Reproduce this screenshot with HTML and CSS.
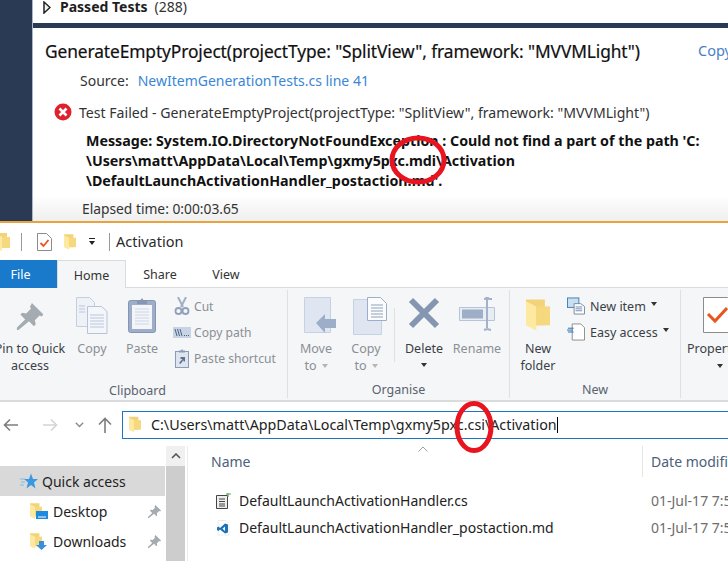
FILE: index.html
```html
<!DOCTYPE html>
<html lang="en">
<head>
<meta charset="utf-8">
<title>Activation</title>
<link rel="stylesheet" href="styles.css">
</head>
<body>
<svg class="defs" width="0" height="0">
  <defs>
    <symbol id="folder" viewBox="0 0 14 18">
      <path d="M0 0h11v15H4l-4-1z" fill="#f3d37a"/>
      <path d="M0 1l6 3v14l-6-3z" fill="#fde9a0"/>
      <path d="M6 4h8v11H6z" fill="#f6d97e"/>
    </symbol>
    <symbol id="pin" viewBox="0 0 14 14">
      <path d="M8 0l6 6-1 1-1-.5-2.500 2.500.5 2-1 1-2.500-2.500L1 14l-1 0 0-1 4.500-4.500L2 6l1-1 2 .5L7.500 3 7 2z" fill="#a4abb1"/>
    </symbol>
  </defs>
</svg>

<section class="vs">
  <div class="vs-rail"></div>
  <div class="vs-main">
    <div class="passed"><svg class="tri" width="8" height="13" viewBox="0 0 8 13"><path d="M1 1l6 5.500L1 12z" fill="#f4f4f4" stroke="#222" stroke-width="1.500"/></svg><b>Passed Tests</b><span class="count">(288)</span></div>
    <div class="vs-bar"></div>
    <div class="title-row">
      <h1>GenerateEmptyProject(projectType: "SplitView", framework: "MVVMLight")</h1>
      <a class="copy">Copy</a>
    </div>
    <p class="source">Source:<a>NewItemGenerationTests.cs line 41</a></p>
    <p class="failed">
      <svg class="err" width="18" height="18" viewBox="0 0 18 18"><circle cx="9" cy="9" r="8.500" fill="#e0202f"/><path d="M5.500 5.500l7 7M12.500 5.500l-7 7" stroke="#fff" stroke-width="2.600"/></svg>
      Test Failed - GenerateEmptyProject(projectType: "SplitView", framework: "MVVMLight")
    </p>
    <p class="msg">Message: System.IO.DirectoryNotFoundException : Could not find a part of the path 'C:<br>\Users\matt\AppData\Local\Temp\gxmy5pxc.mdi\Activation<br>\DefaultLaunchActivationHandler_postaction.md'.</p>
    <p class="elapsed">Elapsed time: 0:00:03.65</p>
  </div>
</section>

<section class="ex">
  <div class="ex-title">
    <svg class="q-folder0" width="10" height="18"><use href="#folder" x="-4" width="14" height="18"/></svg>
    <i class="q-sep"></i>
    <svg class="q-check" width="15" height="18" viewBox="0 0 15 18"><path d="M.5.500h9l5 5v12H.5z" fill="#fff" stroke="#8c8c8c"/><path d="M3.500 10l3 3 5-6" fill="none" stroke="#e8551f" stroke-width="1.800"/></svg>
    <svg class="q-folder" width="12" height="18"><use href="#folder" width="12" height="18"/></svg>
    <svg class="q-drop" width="8" height="8" viewBox="0 0 8 8"><path d="M1 0h6v1H1zM1 3h6L4 7z" fill="#222"/></svg>
    <i class="q-sep q-sep2"></i>
    <span class="q-name">Activation</span>
  </div>

  <nav class="tabs">
    <span class="tab file">File</span>
    <span class="tab home">Home</span>
    <span class="tab share">Share</span>
    <span class="tab view">View</span>
  </nav>

  <div class="ribbon">
    <div class="group g-clip">
      <div class="g-body">
        <div class="big w60">
          <svg class="ico ico-pin" width="27" height="27"><use href="#pin" width="27" height="27"/></svg>
          <span class="dark">Pin to Quick<br>access</span>
        </div>
        <div class="big w50 off">
          <svg class="ico" width="32" height="38" viewBox="0 0 32 38"><path d="M.5.500h13l5 5v24H.5z" fill="#eef1f6" stroke="#c3cfe0"/><path d="M11.500 9.500h14l5.500 5v22H11.500z" fill="#f4f6fa" stroke="#b5c4da"/><path d="M14 18h14M14 21h14M14 24h14M14 27h14M14 30h14M3 9h6M3 12h6M3 15h6" stroke="#b9c7dc"/></svg>
          <span>Copy</span>
        </div>
        <div class="big w50 off">
          <svg class="ico" width="28" height="36" viewBox="0 0 28 36"><rect x=".5" y="3.500" width="27" height="32" rx="2" fill="#9eaec8" stroke="#8496b4"/><rect x="4" y="8" width="20" height="24" fill="#f3f5f9"/><path d="M7 12h14M7 15h14M7 18h14M7 21h14M7 24h14M7 27h14" stroke="#cdd6e4"/><path d="M9 7V4h3l2-3 2 3h3v3z" fill="#8496b4"/></svg>
          <span>Paste</span>
        </div>
        <div class="smalls off clip-smalls">
          <div class="small"><svg width="14" height="18" viewBox="0 0 14 18"><path d="M3 0l5 10M11 0L6 10" stroke="#a3b0c3" stroke-width="2"/><circle cx="3.500" cy="14" r="3" fill="none" stroke="#8fa0ba" stroke-width="1.800"/><circle cx="10.500" cy="14" r="3" fill="none" stroke="#8fa0ba" stroke-width="1.800"/></svg><span>Cut</span></div>
          <div class="small"><svg width="18" height="11" viewBox="0 0 18 11"><rect width="18" height="11" fill="#c8d4e6"/><path d="M2 2l2 7M4.500 2l2 7M7 2l2 7" stroke="#4c6283"/><path d="M11 8.500h1M13 8.500h1M15 8.500h1" stroke="#4c6283"/></svg><span>Copy path</span></div>
          <div class="small"><svg width="14" height="19" viewBox="0 0 14 19"><rect x=".5" y="2.500" width="13" height="16" fill="#dfe5ee" stroke="#8a9cb8"/><path d="M4 3.500V1.500h2L7 0l1 1.500h2v2z" fill="#8a9cb8"/><path d="M4 14l3.500-4H5.500V8H10v4.500H8.500V11L5.500 15z" fill="#5d7396"/></svg><span>Paste shortcut</span></div>
        </div>
      </div>
      <div class="g-label label-clip">Clipboard</div>
    </div>

    <div class="group g-org">
      <div class="g-body">
        <div class="big w50 off shifted">
          <svg class="ico" width="32" height="36" viewBox="0 0 32 36"><path d="M.5.500h26v35H.5z" fill="#dfe6f1" stroke="#c6d2e4"/><path d="M12 26l9-9v5h11v9H21v5z" fill="#9daec8"/></svg>
          <span>Move<br>to<i class="caret light"></i></span>
        </div>
        <div class="big w50 off shifted">
          <svg class="ico" width="34" height="38" viewBox="0 0 34 38"><path d="M.5 2.500h28v35H.5z" fill="#dfe6f1" stroke="#c6d2e4"/><path d="M14.500.500h13l6 6v17h-19z" fill="#fbfcfd" stroke="#9daec8"/><path d="M18 8h12M18 11h12M18 14h12M18 17h12M18 20h12" stroke="#8fa0ba"/></svg>
          <span>Copy<br>to<i class="caret light"></i></span>
        </div>
        <i class="inner-sep"></i>
        <div class="big w56 del">
          <svg class="ico" width="32" height="32" viewBox="0 0 32 32"><path d="M3 3l26 26M29 3L3 29" stroke="#8596b3" stroke-width="6"/></svg>
          <span class="dark">Delete<br><i class="caret"></i></span>
        </div>
        <div class="big w50 off">
          <svg class="ico" width="36" height="34" viewBox="0 0 36 34"><path d="M.5 10.500h35v13H.5z" fill="#e8edf4" stroke="#b5c4da"/><rect x="3" y="12.500" width="21" height="9" fill="#9eaec8"/><path d="M28 0l2 2h3M28 0l-2 2h-1M28 1v30M28 32l-3 1M28 32l4 1" stroke="#a3b2ca" stroke-width="2" fill="none"/></svg>
          <span>Rename</span>
        </div>
      </div>
      <div class="g-label">Organise</div>
    </div>

    <div class="group g-new">
      <div class="g-body">
        <div class="big w56">
          <svg class="ico" width="24" height="36"><use href="#folder" width="24" height="36"/></svg>
          <span class="dark">New<br>folder</span>
        </div>
        <div class="smalls dark new-smalls">
          <div class="small"><svg width="19" height="18" viewBox="0 0 19 18"><rect x=".5" y=".5" width="12" height="10" fill="#c9def0" stroke="#3f7fb5"/><path d="M7.500 6.500h7l4 3v8h-11z" fill="#fff" stroke="#7a8a9c"/><path d="M9 10h7M9 12h7M9 14h7" stroke="#6d8bb0"/></svg><span>New item</span><i class="caret"></i></div>
          <div class="small"><svg width="19" height="18" viewBox="0 0 19 18"><path d="M5.500.5h9l4 4v13h-13z" fill="#fff" stroke="#8c8c8c"/><path d="M1 5h6M0 7h6M1 9h6" stroke="#1f6fb5"/></svg><span>Easy access</span><i class="caret"></i></div>
        </div>
      </div>
      <div class="g-label">New</div>
    </div>

    <div class="group g-open">
      <div class="g-body">
        <div class="big w-prop">
          <svg class="ico" width="36" height="36" viewBox="0 0 36 36"><path d="M.5.500h24l11 11v24H.5z" fill="#fff" stroke="#8c8c8c"/><path d="M5 17l7 7 12-13" fill="none" stroke="#e8551f" stroke-width="3"/></svg>
          <span class="dark">Properties<br><i class="caret"></i></span>
        </div>
      </div>
    </div>
  </div>

  <div class="addr-row">
    <svg class="nav-ico back" width="16" height="14" viewBox="0 0 16 14"><path d="M15 7H2M7 1.500L1.500 7 7 12.500" fill="none" stroke="#7d7d7d" stroke-width="1.600"/></svg>
    <svg class="nav-ico fwd" width="16" height="14" viewBox="0 0 16 14"><path d="M1 7h13M9 1.500L14.500 7 9 12.500" fill="none" stroke="#d4d4d4" stroke-width="1.600"/></svg>
    <svg class="nav-ico down" width="9" height="6" viewBox="0 0 9 6"><path d="M.8.800L4.500 4.500 8.200.8" fill="none" stroke="#8a8a8a" stroke-width="1.400"/></svg>
    <svg class="nav-ico up" width="14" height="16" viewBox="0 0 14 16"><path d="M7 16V2M1 7.500L7 1.500l6 6" fill="none" stroke="#7d7d7d" stroke-width="1.600"/></svg>
    <div class="addr">
      <svg width="12" height="17"><use href="#folder" width="12" height="17"/></svg>
      <span>C:\Users\matt\AppData\Local\Temp\gxmy5pxc.csi\Activation</span><i class="cursor"></i>
    </div>
  </div>

  <div class="browser">
    <aside class="tree">
      <div class="tree-list">
        <div class="tree-item sel">
          <svg width="18" height="16" viewBox="0 0 18 16"><path d="M11 .5l2 5.500h5l-4 3.500 1.500 6-4.500-3.500L6.500 15.500 8 9.500 4 6h5z" fill="#3a98e0"/><path d="M0 6h5M1 9h4M0 12h4" stroke="#7cbcec"/></svg>
          <span class="t-text">Quick access</span>
        </div>
        <div class="tree-item sub">
          <svg width="18" height="18" viewBox="0 0 18 18"><use href="#folder" width="12" height="18"/><rect x="6" y="9" width="12" height="8" fill="#1c8be0"/><rect x="8" y="14.500" width="8" height="1" fill="#fff"/></svg>
          <span class="t-text">Desktop</span>
          <svg class="t-pin" width="13" height="13"><use href="#pin" width="13" height="13"/></svg>
        </div>
        <div class="tree-item sub">
          <svg width="18" height="18" viewBox="0 0 18 18"><use href="#folder" width="12" height="18"/><path d="M9 9h5v4h3l-5.500 5L6 13h3z" fill="#3a8fdc"/></svg>
          <span class="t-text">Downloads</span>
          <svg class="t-pin" width="13" height="13"><use href="#pin" width="13" height="13"/></svg>
        </div>
      </div>
      <div class="scroll">
        <div class="s-up"><svg width="10" height="6" viewBox="0 0 10 6"><path d="M1 5l4-4 4 4" fill="none" stroke="#555" stroke-width="1.600"/></svg></div>
        <div class="s-thumb"></div>
      </div>
    </aside>
    <main class="files">
      <svg class="sort" width="10" height="6" viewBox="0 0 10 6"><path d="M.5 5.500L5 1l4.500 4.500" fill="none" stroke="#a0a0a0"/></svg>
      <div class="f-head">
        <span class="c-name">Name</span>
        <span class="c-date">Date modified</span>
      </div>
      <div class="f-row">
        <span class="c-name"><svg width="15" height="16" viewBox="0 0 15 16"><path d="M.5 2.500h11v13H.5z" fill="#eee" stroke="#444"/><path d="M3 6h6M3 8.500h6M3 11h6M3 13h6" stroke="#444"/><path d="M10 1h5M12 0v4" stroke="#5aa85a" stroke-width="1.200"/></svg><span>DefaultLaunchActivationHandler.cs</span></span>
        <span class="c-date">01-Jul-17 7:58 PM</span>
      </div>
      <div class="f-row">
        <span class="c-name"><svg width="15" height="16" viewBox="0 0 15 16"><path d="M2 .5h8l3 3V15H2z" fill="#fff" stroke="#ececec"/><path d="M12 4.500v8L9 13.500 4 9.500 2.500 11 1 10V7.500L2.500 6.500 4 8l5-4.500zM9 6.500L6.500 8.800 9 11z" fill="#1a72b8"/></svg><span>DefaultLaunchActivationHandler_postaction.md</span></span>
        <span class="c-date">01-Jul-17 7:58 PM</span>
      </div>
    </main>
  </div>
</section>

<svg class="ring ring-a" width="62" height="54" viewBox="0 0 62 54"><ellipse cx="30" cy="26" rx="26" ry="22" fill="none" stroke="#e8141f" stroke-width="5"/></svg>
<svg class="ring ring-b" width="44" height="56" viewBox="0 0 44 56"><ellipse cx="22" cy="28" rx="17" ry="23.500" fill="none" stroke="#e8141f" stroke-width="5"/></svg>
</body>
</html>
```
FILE: styles.css
```css
* { box-sizing: border-box; }
html, body { margin: 0; height: 561px; overflow: hidden; background: #fff; }
body { position: relative; font-family: "Noto Sans", "Open Sans", sans-serif; color: #1e1e1e; font-size: 14px; width: 728px; }
.defs { position: absolute; }
svg { display: block; flex: none; }
p, h1 { margin: 0; }
i { font-style: normal; }

/* Visual Studio test pane */
.vs { display: flex; height: 223px; border-bottom: 2px solid #e8a33d; overflow: hidden; }
.vs-rail { flex: none; background: #2a3a55; border-right: 1px solid #a9b6cc; width: 33px; }
.vs-main { flex: 1; min-width: 0; background: linear-gradient(#fff 195px, #efefef 221px); }
.passed { display: flex; align-items: center; padding: 0 0 9px 10px; font-size: 14px; line-height: 14px; height: 23px; }
.passed b { font-weight: 700; margin-left: 9px; }
.count { margin-left: 7px; color: #333; }
.vs-bar { height: 5px; background: #2a3a55; }
.title-row { display: flex; justify-content: space-between; padding: 12px 0 0 12px; height: 40px; white-space: nowrap; }
h1 { font-size: 17.350px; font-weight: 400; color: #111; letter-spacing: -.1px; line-height: 22px; -webkit-text-stroke: .2px #111; }
.copy { color: #4a7fc7; font-size: 14.500px; line-height: 20px; margin-right: -4px; }
.source { padding-left: 47px; height: 30px; line-height: 26px; font-size: 14px; color: #333; white-space: nowrap; }
.source a { color: #3a86d6; margin-left: 9px; }
.failed { display: flex; gap: 7px; align-items: center; padding-left: 21px; height: 26px; font-size: 14.100px; color: #333; white-space: nowrap; margin-top: 1px; }
.msg { font-weight: 700; padding: 6px 0 0 53px; line-height: 20px; font-size: 14.250px; color: #111; white-space: nowrap; height: 74px; }
.elapsed { padding-left: 49px; font-size: 13.800px; line-height: 20px; color: #333; }

/* Explorer title */
.ex-title { height: 37px; display: flex; align-items: center; }
.q-sep { width: 1px; height: 18px; background: #9a9a9a; margin-left: 11px; }
.q-check { margin-left: 15px; }
.q-folder { margin-left: 12px; }
.q-drop { margin-left: 12px; }
.q-sep2 { margin-left: 13px; }
.q-name { margin-left: 6px; padding-bottom: 2px; font-size: 14.500px; color: #2a2a2a; }

.tabs { display: flex; height: 28px; border-bottom: 1px solid #dadbdc; font-size: 12.500px; color: #333; }
.tab { display: flex; align-items: center; justify-content: center; padding-top: 1px; }
.file { width: 57px; background: #1979ca; color: #fff; height: 28px; padding-right: 16px; }
.home { width: 69px; background: #f5f6f7; border: 1px solid #dadbdc; border-bottom: 0; height: 28px; }
.share { width: 68px; }
.view { width: 64px; }

/* Ribbon */
.ribbon { display: flex; height: 114px; background: #f5f6f7; border-bottom: 2px solid #dadbdc; font-size: 12.500px; overflow: hidden; }
.group { display: flex; flex-direction: column; flex: none; padding-top: 2px; }
.g-body { display: flex; height: 93px; }
.g-label { text-align: center; color: #5a6270; line-height: 16px; height: 16px; }
.label-clip { padding-right: 12px; }
.g-clip { width: 287px; }
.g-org, .g-new, .g-open { border-left: 1px solid #dfe0e2; height: 108px; margin-top: 2px; padding-top: 0; }
.g-org .g-body, .g-new .g-body { height: 95px; }
.g-org { width: 222px; }
.g-new { width: 171px; }
.g-open { flex: 1; }
.big { display: flex; flex-direction: column; align-items: center; text-align: center; line-height: 17px; flex: none; padding-top: 50px; position: relative; white-space: nowrap; }
.ico { position: absolute; top: 7px; left: 50%; transform: translateX(-50%); }
.ico-pin { top: 13px; }
.shifted .ico { margin-left: 4px; }
.w60 { width: 60px; margin-right: 7px; }
.w50 { width: 50px; }
.w56 { width: 56px; }
.off { color: #8a8f96; }
.dark { color: #3a3f47; }
.smalls { display: flex; flex-direction: column; padding: 3px 0 0 10px; }
.clip-smalls { padding-left: 6px; font-size: 12.100px; }
.clip-smalls .small { gap: 3px; }
.small { height: 26px; display: flex; align-items: center; gap: 5px; white-space: nowrap; }
.small svg { width: 18px; }
.caret { display: inline-block; width: 0; height: 0; border-left: 3.500px solid transparent; border-right: 3.500px solid transparent; border-top: 4px solid #333; margin-left: 5px; vertical-align: 2px; }
.caret.light { border-top-color: #b5b5b5; }
.del .caret { margin-left: 0; vertical-align: 3px; }
.small .caret { margin: -4px 0 0 0; }
.g-org .g-body { padding-left: 3px; }
.inner-sep { width: 1px; height: 54px; background: #dfe0e2; margin: 18px 1px 0 3px; }
.new-smalls { padding-left: 1px; }
.w-prop { width: 60px; align-items: flex-start; padding-left: 6px; }
.w-prop .ico { left: 22px; transform: none; }

/* Address row */
.addr-row { display: flex; align-items: center; height: 44px; padding-top: 1px; }
.nav-ico.back { margin-left: 3px; }
.nav-ico.fwd { margin-left: 23px; }
.nav-ico.down { margin-left: 17px; }
.nav-ico.up { margin-left: 14px; }
.addr { flex: 1; margin-left: 10px; height: 28px; border: 1px solid #1a78c2; border-right: 0; display: flex; align-items: center; padding-left: 6px; font-size: 14.300px; white-space: nowrap; color: #222; }
.addr span { margin-left: 10px; }
.cursor { width: 1px; height: 16px; background: #000; }

/* Browser */
.browser { display: flex; height: 115px; overflow: hidden; }
.tree { width: 188px; flex: none; display: flex; border-right: 1px solid #ececec; }
.tree-list { width: 165px; flex: none; padding-top: 20px; }
.tree-item { height: 30px; display: flex; align-items: center; font-size: 14px; }
.tree-item.sel { background: #d9d9d9; padding-left: 20px; }
.t-text { margin-left: 4px; padding-top: 1px; }
.tree-item.sub { padding-left: 30px; }
.tree-item.sub .t-text { margin-left: 5px; }
.t-pin { margin-left: auto; margin-right: 4px; }
.scroll { width: 19px; margin-left: 1px; background: #cdcdcd; display: flex; flex-direction: column; }
.s-up { height: 20px; background: #f0f0f0; display: flex; align-items: center; justify-content: center; }
.s-thumb { flex: 1; background: #cdcdcd; }
.files { flex: 1; position: relative; min-width: 0; font-size: 14px; }
.sort { position: absolute; left: 230px; top: 0; }
.f-head { display: flex; height: 41px; color: #4c607a; align-items: flex-start; }
.f-head .c-name { padding: 6px 0 0 23px; }
.f-head .c-date { border-left: 1px solid #e5e5e5; height: 31px; line-height: 32px; padding-left: 8px; }
.c-name { width: 454px; flex: none; white-space: nowrap; display: flex; align-items: center; gap: 8px; }
.c-date { white-space: nowrap; }
.f-row { display: flex; height: 27px; align-items: center; }
.f-row .c-name { padding-left: 28px; color: #222; }
.f-row .c-date { color: #6d6d6d; padding-left: 9px; }

/* Annotations lying over the screenshot */
.ring { position: absolute; }
.ring-a { left: 388px; top: 134px; }
.ring-b { left: 452px; top: 399px; }
```
